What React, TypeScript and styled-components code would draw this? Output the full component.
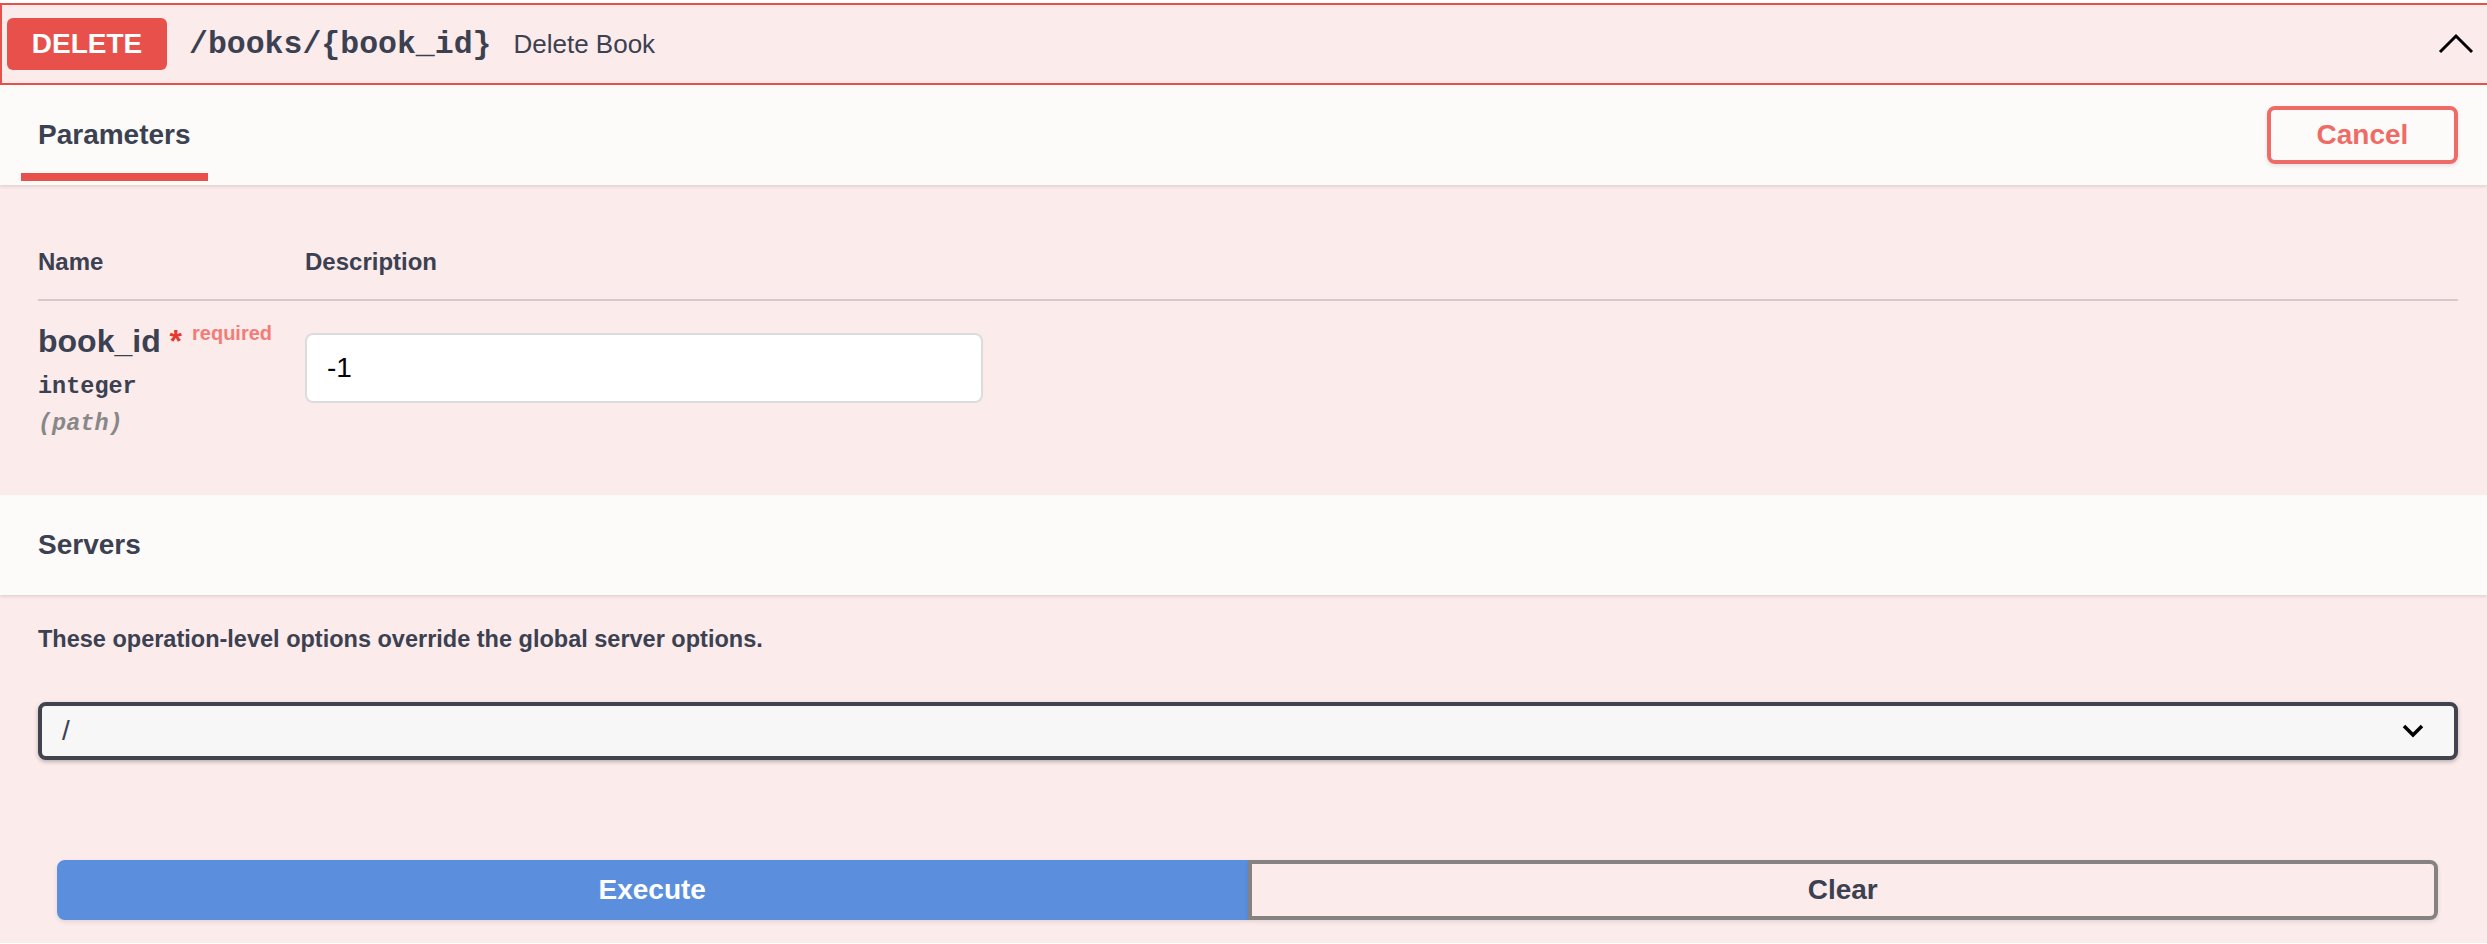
import styled, { createGlobalStyle } from "styled-components";

const GlobalStyle = createGlobalStyle`
  body {
    margin: 0;
    background: #ffffff;
    font-family: "Liberation Sans", Helvetica, Arial, sans-serif;
    color: #3b4151;
  }
`;

const Page = styled.div`
  padding-top: 3px;
`;

const OpBlock = styled.div`
  background: #fcebeb;
  border-top: 2px solid #e8514b;
`;

const Summary = styled.div`
  display: flex;
  align-items: center;
  height: 78px;
  padding: 0 13px 0 5px;
  border-left: 2px solid #e8514b;
  border-bottom: 2px solid #e8514b;
`;

const Method = styled.span`
  display: flex;
  align-items: center;
  justify-content: center;
  width: 160px;
  height: 52px;
  border-radius: 6px;
  background: #e8514b;
  color: #ffffff;
  font-size: 28px;
  font-weight: 700;
`;

const Path = styled.span`
  padding: 0 22px;
  font-family: "Liberation Mono", "Courier New", monospace;
  font-size: 31.5px;
  font-weight: 700;
  color: #3b4151;
`;

const Desc = styled.span`
  flex: 1;
  font-size: 26px;
  color: #3b4151;
`;

const SectionHeader = styled.div<{ $pad?: number }>`
  display: flex;
  align-items: center;
  justify-content: space-between;
  height: 100px;
  padding: 0 29px 0 ${(p) => p.$pad ?? 38}px;
  background: #fdfbfa;
  box-shadow: 0 2px 3px rgba(0, 0, 0, 0.1);
  position: relative;
`;

const TabItem = styled.h4`
  position: relative;
  margin: 0;
  padding: 0 17px;
  font-size: 28px;
  line-height: 34px;
  font-weight: 700;

  &::after {
    content: "";
    position: absolute;
    left: 0;
    right: 0;
    bottom: -29px;
    height: 8px;
    background: #e8514b;
  }
`;

const Title = styled.h4`
  margin: 0;
  font-size: 28px;
  line-height: 34px;
  font-weight: 700;
`;

const CancelButton = styled.button`
  width: 191px;
  height: 58px;
  border: 4px solid #ee6b66;
  border-radius: 8px;
  background: transparent;
  color: #ee6b66;
  font-family: inherit;
  font-size: 28px;
  font-weight: 700;
  box-shadow: 0 2px 4px rgba(0, 0, 0, 0.1);
`;

const ParamsBody = styled.div`
  display: grid;
  grid-template-columns: 267px 1fr;
  padding: 40px 29px 39px 38px;
`;

const HeadCell = styled.div`
  padding: 24px 0;
  font-size: 24px;
  line-height: 26px;
  font-weight: 700;
  border-bottom: 2px solid rgba(59, 65, 81, 0.2);
`;

const NameCell = styled.div`
  padding: 20px 0;
`;

const ParamName = styled.div`
  font-size: 32px;
  line-height: 40px;
  font-weight: 700;
  white-space: nowrap;

  & span {
    color: #e8372e;
  }

  &::after {
    content: "required";
    position: relative;
    top: -12px;
    padding: 10px;
    font-size: 20px;
    color: #f27d78;
  }
`;

const ParamType = styled.div<{ $muted?: boolean }>`
  padding: ${(p) => (p.$muted ? "3px 0 0" : "10px 0")};
  font-family: "Liberation Mono", "Courier New", monospace;
  font-size: 23.5px;
  line-height: 24px;
  font-weight: 700;
  font-style: ${(p) => (p.$muted ? "italic" : "normal")};
  color: ${(p) => (p.$muted ? "#888888" : "#3b4151")};
`;

const ValueCell = styled.div`
  padding: 32px 0 20px;
`;

const TextInput = styled.input`
  box-sizing: border-box;
  display: block;
  width: 678px;
  height: 70px;
  padding: 0 20px;
  border: 2px solid #dcdcdc;
  border-radius: 8px;
  background: #ffffff;
  font-family: "Liberation Sans", Helvetica, Arial, sans-serif;
  font-size: 28px;
  color: #000000;
  outline: none;
`;

const ServersBody = styled.div`
  padding: 30px 29px 0 38px;
`;

const Message = styled.h4`
  margin: 0 0 49px;
  font-size: 23.5px;
  line-height: 28px;
  font-weight: 700;
`;

const Select = styled.div`
  box-sizing: border-box;
  display: flex;
  align-items: center;
  justify-content: space-between;
  height: 58px;
  padding: 0 30px 0 20px;
  border: 4px solid #41444e;
  border-radius: 8px;
  background: #f7f7f7;
  box-shadow: 0 2px 4px rgba(0, 0, 0, 0.25);
  font-size: 28px;
  font-weight: 400;
  color: #3b4151;
`;

const ButtonGroup = styled.div`
  display: flex;
  padding: 100px 49px 23px 57px;
`;

const ActionButton = styled.button<{ $primary?: boolean }>`
  flex: 1;
  height: 60px;
  border: 4px solid ${(p) => (p.$primary ? "#5b8fdd" : "#878282")};
  border-radius: ${(p) => (p.$primary ? "8px 0 0 8px" : "0 8px 8px 0")};
  background: ${(p) => (p.$primary ? "#5b8fdd" : "transparent")};
  color: ${(p) => (p.$primary ? "#ffffff" : "#3b4151")};
  font-family: inherit;
  font-size: 28px;
  font-weight: 700;
  box-shadow: 0 2px 4px rgba(0, 0, 0, 0.1);
`;

export default function App() {
  return (
    <>
      <GlobalStyle />
      <Page>
        <OpBlock>
          <Summary>
            <Method>DELETE</Method>
            <Path>/books/{"{book_id}"}</Path>
            <Desc>Delete Book</Desc>
            <svg width="36" height="22" viewBox="0 0 36 22">
              <polyline
                points="2,19 18,3 34,19"
                fill="none"
                stroke="#000"
                strokeWidth="3"
              />
            </svg>
          </Summary>

          <SectionHeader $pad={21}>
            <TabItem>Parameters</TabItem>
            <CancelButton>Cancel</CancelButton>
          </SectionHeader>

          <ParamsBody>
            <HeadCell>Name</HeadCell>
            <HeadCell>Description</HeadCell>
            <NameCell>
              <ParamName>
                book_id<span>&nbsp;*</span>
              </ParamName>
              <ParamType>integer</ParamType>
              <ParamType $muted>(path)</ParamType>
            </NameCell>
            <ValueCell>
              <TextInput defaultValue="-1" />
            </ValueCell>
          </ParamsBody>

          <SectionHeader>
            <Title>Servers</Title>
          </SectionHeader>

          <ServersBody>
            <Message>
              These operation-level options override the global server options.
            </Message>
            <Select>
              <span>/</span>
              <svg width="22" height="14" viewBox="0 0 22 14">
                <polyline
                  points="2,2 11,11 20,2"
                  fill="none"
                  stroke="#000"
                  strokeWidth="3.5"
                />
              </svg>
            </Select>
          </ServersBody>

          <ButtonGroup>
            <ActionButton $primary>Execute</ActionButton>
            <ActionButton>Clear</ActionButton>
          </ButtonGroup>
        </OpBlock>
      </Page>
    </>
  );
}
